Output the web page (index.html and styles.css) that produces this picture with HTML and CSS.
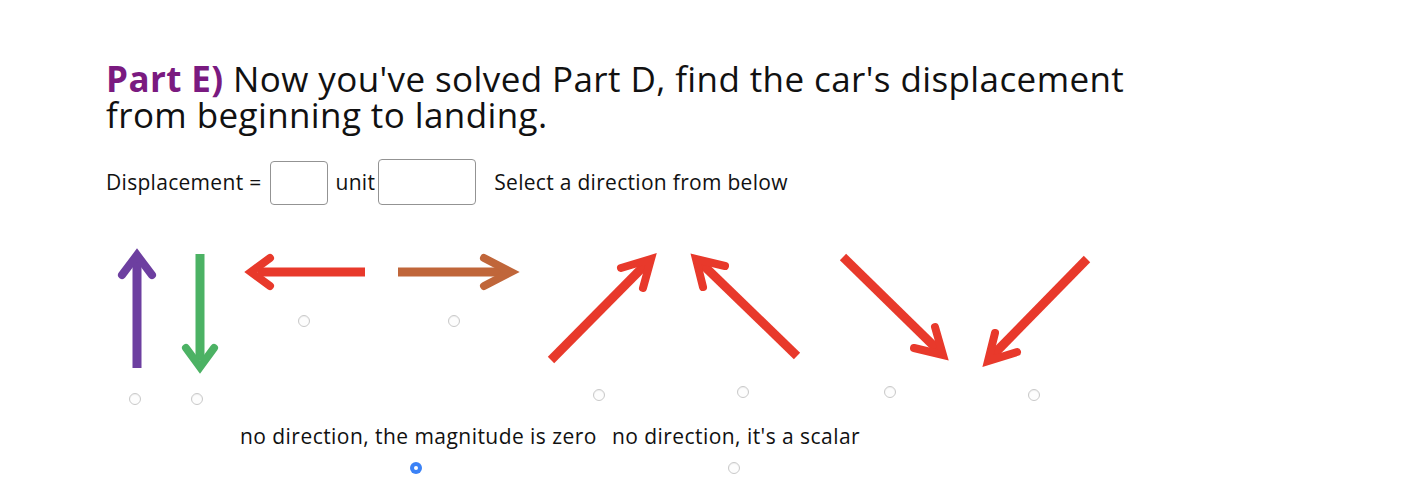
FILE: index.html
```html
<!DOCTYPE html>
<html lang="en">
<head>
<meta charset="utf-8">
<title>Part E</title>
<link rel="stylesheet" href="styles.css">
</head>
<body>
<div class="page">
  <h1 class="title"><span class="part">Part E)</span> Now you've solved Part D, find the car's displacement from beginning to landing.</h1>

  <div class="answer-row">
    <span class="label">Displacement =</span>
    <input class="box box-num" type="text">
    <span class="unit">unit</span>
    <input class="box box-unit" type="text">
    <span class="hint">Select a direction from below</span>
  </div>

  <div class="arrows">
    <label class="opt">
      <svg class="art" width="46" height="123" viewBox="112 250 46 123">
        <line x1="137" y1="368" x2="137" y2="262" stroke="#6d3fa0" stroke-width="9"/>
        <polyline points="122,275 137,255 152,275" fill="none" stroke="#6d3fa0" stroke-width="8" stroke-linecap="round" stroke-linejoin="miter"/>
      </svg>
      <input class="radio" type="radio" name="dir">
    </label>
    <label class="opt">
      <svg class="art" width="78" height="123" viewBox="158 250 78 123">
        <line x1="200" y1="254" x2="200" y2="360" stroke="#4cb264" stroke-width="9"/>
        <polyline points="186,348 200,367 214,348" fill="none" stroke="#4cb264" stroke-width="8" stroke-linecap="round" stroke-linejoin="miter"/>
      </svg>
      <input class="radio" type="radio" name="dir">
    </label>
    <label class="opt">
      <svg class="art" width="136" height="45" viewBox="236 250 136 45">
        <line x1="365" y1="272" x2="258" y2="272" stroke="#e8392b" stroke-width="9"/>
        <polyline points="270,258 251,272 270,286" fill="none" stroke="#e8392b" stroke-width="8" stroke-linecap="round" stroke-linejoin="miter"/>
      </svg>
      <input class="radio" type="radio" name="dir">
    </label>
    <label class="opt">
      <svg class="art" width="164" height="45" viewBox="372 250 164 45">
        <line x1="398" y1="272" x2="505" y2="272" stroke="#c0663a" stroke-width="9"/>
        <polyline points="484,258 511,272 484,286" fill="none" stroke="#c0663a" stroke-width="8" stroke-linecap="round" stroke-linejoin="miter"/>
      </svg>
      <input class="radio" type="radio" name="dir">
    </label>
    <label class="opt">
      <svg class="art" width="126" height="119" viewBox="536 250 126 119">
        <line x1="551" y1="360" x2="646" y2="264" stroke="#e8392b" stroke-width="9"/>
        <polyline points="621,268 651,259 643,288" fill="none" stroke="#e8392b" stroke-width="8" stroke-linecap="round" stroke-linejoin="miter"/>
      </svg>
      <input class="radio" type="radio" name="dir">
    </label>
    <label class="opt">
      <svg class="art" width="162" height="116" viewBox="662 250 162 116">
        <line x1="797" y1="356" x2="701" y2="263" stroke="#e8392b" stroke-width="9"/>
        <polyline points="725,266 696,259 703,287" fill="none" stroke="#e8392b" stroke-width="8" stroke-linecap="round" stroke-linejoin="miter"/>
      </svg>
      <input class="radio" type="radio" name="dir">
    </label>
    <label class="opt">
      <svg class="art" width="132" height="116" viewBox="824 250 132 116">
        <line x1="843" y1="257" x2="938" y2="350" stroke="#e8392b" stroke-width="9"/>
        <polyline points="935,327 943,355 914,348" fill="none" stroke="#e8392b" stroke-width="8" stroke-linecap="round" stroke-linejoin="miter"/>
      </svg>
      <input class="radio" type="radio" name="dir">
    </label>
    <label class="opt">
      <svg class="art" width="156" height="119" viewBox="956 250 156 119">
        <line x1="1087" y1="259" x2="993" y2="355" stroke="#e8392b" stroke-width="9"/>
        <polyline points="995,333 988,361 1017,352" fill="none" stroke="#e8392b" stroke-width="8" stroke-linecap="round" stroke-linejoin="miter"/>
      </svg>
      <input class="radio" type="radio" name="dir">
    </label>
  </div>

  <div class="text-options">
    <label class="topt">
      <span class="ttext">no direction, the magnitude is zero</span>
      <input class="radio" type="radio" name="dir" checked>
    </label>
    <label class="topt">
      <span class="ttext">no direction, it's a scalar</span>
      <input class="radio" type="radio" name="dir">
    </label>
  </div>
</div>
</body>
</html>
```

FILE: styles.css
```css
* { box-sizing: border-box; }

html, body {
  margin: 0;
  padding: 0;
  background: #ffffff;
}

body {
  font-family: "Open Sans", "Noto Sans", "Liberation Sans", sans-serif;
  color: #111111;
}

.page {
  padding-left: 106px;
  padding-top: 61px;
}

.title {
  margin: 0;
  width: 1050px;
  font-size: 35px;
  letter-spacing: 0.4px;
  line-height: 36px;
  font-weight: 400;
  color: #111111;
}

.part {
  color: #7a1a80;
  font-weight: 700;
}

.answer-row {
  margin-top: 26px;
  display: flex;
  align-items: center;
  height: 46px;
  font-size: 21px;
  letter-spacing: 0.3px;
}

.label {
  margin-right: 9px;
}

.box {
  border: 1.5px solid #939393;
  border-radius: 4px;
  background: #fff;
  font: inherit;
  padding: 0 4px;
  outline: none;
}

.box-num {
  width: 58px;
  height: 44px;
  margin-top: 2px;
}

.box-unit {
  width: 98px;
  height: 46px;
}

.unit {
  margin-left: 7px;
  margin-right: 3px;
}

.hint {
  margin-left: 18px;
}

.arrows {
  margin-top: 45px;
  margin-left: 6px;
  display: flex;
  align-items: flex-start;
}

.opt {
  display: flex;
  flex-direction: column;
  align-items: center;
}

.art {
  display: block;
  overflow: visible;
}

.radio {
  appearance: none;
  -webkit-appearance: none;
  width: 12px;
  height: 12px;
  margin: 20px 0 0 0;
  border-radius: 50%;
  border: 1px solid #c9c9c9;
  background: #fdfdfd;
  box-shadow: inset 0 1px 1px rgba(0,0,0,0.06);
  display: block;
}

.radio:checked {
  border: none;
  background: #3b82f6;
  box-shadow: none;
  position: relative;
}

.radio:checked::after {
  content: "";
  position: absolute;
  left: 4px;
  top: 4px;
  width: 4px;
  height: 4px;
  border-radius: 50%;
  background: #ffffff;
}

.text-options {
  margin-top: 18px;
  margin-left: 134px;
  display: flex;
  gap: 15px;
  font-size: 21px;
  letter-spacing: 0.45px;
}

.topt {
  display: flex;
  flex-direction: column;
  align-items: center;
}

.ttext {
  line-height: 26px;
}

.topt .radio {
  margin-top: 13px;
  margin-right: 4px;
}
```
